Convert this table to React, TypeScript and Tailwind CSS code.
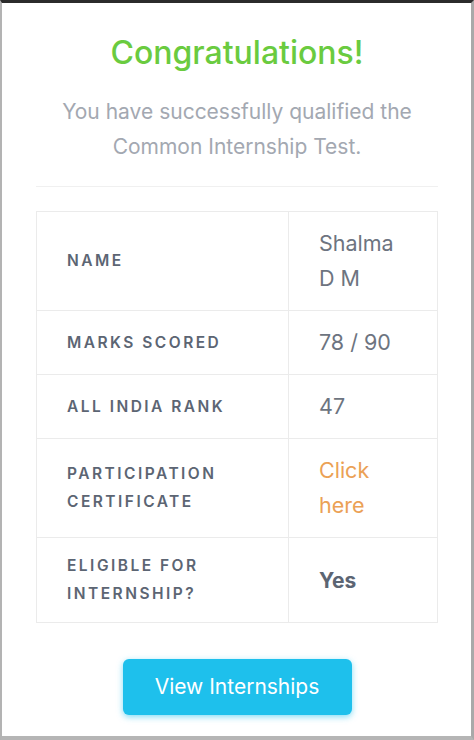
import React from 'react';

const rows = [
  { label: ['NAME'], value: 'Shalma D M', kind: 'text' },
  { label: ['MARKS SCORED'], value: '78 / 90', kind: 'text' },
  { label: ['ALL INDIA RANK'], value: '47', kind: 'text' },
  { label: ['PARTICIPATION', 'CERTIFICATE'], value: 'Click here', kind: 'link' },
  { label: ['ELIGIBLE FOR', 'INTERNSHIP?'], value: 'Yes', kind: 'bold' },
];

const App = () => {
  return (
    <div
      className="w-[474px] h-[740px] bg-white border-t-[3px] border-t-[#2b2b2b] border-l-2 border-l-[#b3b3b3] border-r-[3px] border-r-[#a9a9a9] border-b-4 border-b-[#b5b5b5] overflow-hidden"
      style={{ fontFamily: 'Inter, "Noto Sans", sans-serif' }}
    >
      <div className="pl-[34px] pr-[33px] pt-[31px]">
        {/* Header */}
        <h1 className="text-center text-[32px] leading-[38px] font-medium text-[#6acb3f]">
          Congratulations!
        </h1>
        <p className="mt-[22px] text-center text-[21px] leading-[35px] text-[#a3a8b1] px-2">
          You have successfully qualified the Common Internship Test.
        </p>
        <div className="mt-[22px] h-px bg-[#f0f0f0]" />

        {/* Result table */}
        <table className="mt-[24px] w-full border-collapse border border-[#ebebeb]">
          <tbody>
            {rows.map((row) => (
              <tr key={row.label.join(' ')} className="border-b border-[#ebebeb]">
                <td className="w-[252px] border-r border-[#ebebeb] pl-[30px] pr-3 py-[14px] align-middle">
                  {row.label.map((line) => (
                    <div
                      key={line}
                      className="text-[15.5px] leading-[28px] font-semibold tracking-[0.16em] text-[#5c6573]"
                    >
                      {line}
                    </div>
                  ))}
                </td>
                <td className="pl-[30px] pr-[34px] py-[14px] align-middle">
                  {row.kind === 'link' && (
                    <a className="block text-[21.5px] leading-[35px] text-[#eba155] cursor-pointer">
                      {row.value}
                    </a>
                  )}
                  {row.kind === 'bold' && (
                    <span className="block text-[21px] leading-[35px] font-bold text-[#5c6573]">
                      {row.value}
                    </span>
                  )}
                  {row.kind === 'text' && (
                    <span className="block text-[21.5px] leading-[35px] text-[#6d7480]">
                      {row.value}
                    </span>
                  )}
                </td>
              </tr>
            ))}
          </tbody>
        </table>

        {/* Action */}
        <div className="mt-[36px] flex justify-center">
          <button className="w-[229px] h-[56px] rounded-md bg-[#1ec0ec] text-white text-[21px] shadow-[0_2px_6px_rgba(30,192,236,0.55)]">
            View Internships
          </button>
        </div>
      </div>
    </div>
  );
};

export default App;
